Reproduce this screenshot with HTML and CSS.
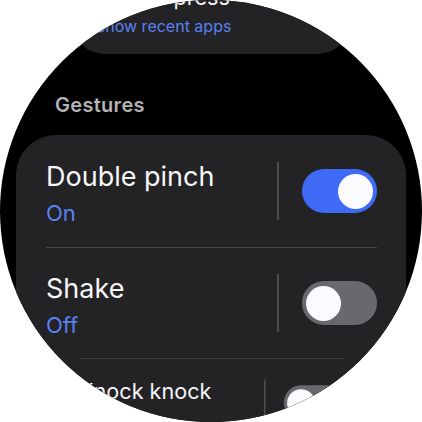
FILE: index.html
```html
<!DOCTYPE html>
<html>
<head>
<meta charset="utf-8">
<link rel="stylesheet" href="styles.css">
</head>
<body>
<div class="watch">
  <div class="list">
    <div class="card card-top">
      <div class="row">
        <div class="text">
          <div class="title">Double press</div>
          <div class="sub">Show recent apps</div>
        </div>
      </div>
    </div>
    <div class="header">Gestures</div>
    <div class="card">
      <div class="row">
        <div class="text">
          <div class="title">Double pinch</div>
          <div class="sub">On</div>
        </div>
        <div class="vsep"></div>
        <div class="toggle on"><div class="knob"></div></div>
      </div>
      <div class="row">
        <div class="text">
          <div class="title">Shake</div>
          <div class="sub">Off</div>
        </div>
        <div class="vsep"></div>
        <div class="toggle"><div class="knob"></div></div>
      </div>
      <div class="row shrink">
        <div class="text">
          <div class="title">Knock knock</div>
          <div class="sub">Off</div>
        </div>
        <div class="vsep"></div>
        <div class="toggle"><div class="knob"></div></div>
      </div>
    </div>
  </div>
</div>
</body>
</html>
```

FILE: styles.css
```css
html, body {
  margin: 0;
  padding: 0;
  background: #ffffff;
}
body {
  font-family: Inter, "Noto Sans", sans-serif;
}
.watch {
  width: 422px;
  height: 422px;
  border-radius: 50%;
  overflow: hidden;
  background: #000000;
}
.list {
  display: flex;
  flex-direction: column;
  margin-top: -58px;
}
.card {
  margin: 0 16px;
  background: #232325;
  border-radius: 40px;
  padding: 0 29px 0 30px;
  flex-shrink: 0;
}
.card-top {
  margin: 0 38px;
  padding-left: 28px;
  transform: scale(0.8);
  transform-origin: center bottom;
}
.card-top .sub {
  font-size: 20px;
}
.header {
  padding: 39px 0 18px 55px;
  font-size: 20px;
  line-height: 24px;
  font-weight: 600;
  letter-spacing: 0.3px;
  color: #b3b3b5;
}
.row {
  height: 112px;
  display: flex;
  align-items: center;
}
.row + .row {
  border-top: 1px solid #454548;
  height: 110px;
}
.shrink {
  transform: scale(0.8);
  transform-origin: center top;
}
.text {
  flex: 1;
  padding-top: 4px;
}
.title {
  font-size: 27px;
  line-height: 33px;
  color: #f6f6f8;
}
.sub {
  margin-top: 6px;
  font-size: 22px;
  line-height: 28px;
  color: #5b80f2;
}
.vsep {
  width: 2px;
  height: 58px;
  background: #4e4e52;
  margin-right: 23px;
}
.toggle {
  width: 75px;
  height: 44px;
  border-radius: 22px;
  background: #69686e;
  display: flex;
  align-items: center;
  padding: 0 4px;
  box-sizing: border-box;
}
.toggle.on {
  background: #3f6af6;
  justify-content: flex-end;
}
.knob {
  width: 35px;
  height: 35px;
  border-radius: 50%;
  background: #fbfbff;
}
```
